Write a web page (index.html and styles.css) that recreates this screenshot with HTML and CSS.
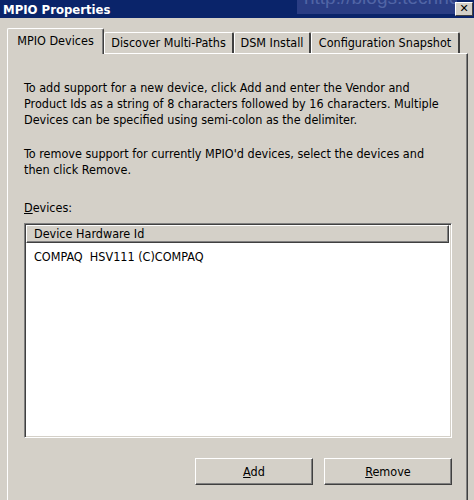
FILE: index.html
```html
<!DOCTYPE html>
<html>
<head>
<meta charset="utf-8">
<link rel="stylesheet" href="styles.css">
</head>
<body>
<div class="window">
  <div class="titlebar">
    <span class="title">MPIO Properties</span>
    <div class="watermark"><span>http://blogs.technet</span></div>
    <div class="close">✕</div>
  </div>
  <div class="tabs">
    <div class="tab active t1">MPIO Devices</div>
    <div class="tab t2">Discover Multi-Paths</div>
    <div class="tab t3">DSM Install</div>
    <div class="tab t4">Configuration Snapshot</div>
  </div>
  <div class="panel">
    <p class="para p1">To add support for a new device, click Add and enter the Vendor and Product Ids as a string of 8 characters followed by 16 characters. Multiple Devices can be specified using semi-colon as the delimiter.</p>
    <p class="para p2">To remove support for currently MPIO'd devices, select the devices and then click Remove.</p>
    <div class="label"><u>D</u>evices:</div>
    <div class="listbox">
      <div class="listhead"><span>Device Hardware Id</span></div>
      <div class="listrow">COMPAQ&nbsp; HSV111 (C)COMPAQ</div>
    </div>
    <div class="buttons">
      <div class="btn add"><u>A</u>dd</div>
      <div class="btn remove"><u>R</u>emove</div>
    </div>
  </div>
</div>
</body>
</html>
```

FILE: styles.css
```css
html, body {
  margin: 0;
  padding: 0;
  background: #d4d0c8;
}
body {
  width: 474px;
  height: 500px;
  overflow: hidden;
  font-family: "DejaVu Sans Condensed", "DejaVu Sans", sans-serif;
  font-size: 12.5px;
  color: #000;
}
.window {
  display: flex;
  flex-direction: column;
}
.titlebar {
  position: relative;
  height: 18px;
  background: #0a246a;
  display: flex;
  align-items: center;
}
.title {
  color: #fff;
  font-weight: bold;
  font-size: 13px;
  padding-left: 3px;
  font-family: "DejaVu Sans Condensed", "DejaVu Sans", sans-serif;
}
.watermark {
  position: absolute;
  left: 297px;
  top: 0;
  width: 160px;
  height: 14px;
  background: #2a3d84;
  overflow: hidden;
}
.watermark span {
  display: block;
  margin-top: -13px;
  padding-left: 7px;
  font-family: "Liberation Sans", sans-serif;
  font-size: 19px;
  line-height: 22px;
  color: #5165a6;
  white-space: nowrap;
}
.close {
  position: absolute;
  left: 455px;
  top: 2px;
  width: 16px;
  height: 12px;
  background: #d4d0c8;
  border-top: 1px solid #fff;
  border-left: 1px solid #fff;
  border-right: 1px solid #404040;
  border-bottom: 1px solid #404040;
  font-size: 11px;
  font-weight: bold;
  line-height: 12px;
  text-align: center;
  color: #000;
  font-family: "DejaVu Sans", sans-serif;
}
.tabs {
  display: flex;
  align-items: flex-end;
  height: 35px;
  padding-left: 7px;
  position: relative;
  z-index: 2;
}
.tab {
  box-sizing: border-box;
  height: 21px;
  border-top: 1px solid #fff;
  border-left: 1px solid #fff;
  border-right: 2px solid #404040;
  border-radius: 2px 2px 0 0;
  text-align: center;
  line-height: 20px;
  white-space: nowrap;
  background: #d4d0c8;
}
.tab.active {
  height: 26px;
  margin-bottom: -1px;
  line-height: 23px;
  border-right: 1px solid #404040;
  box-shadow: inset -1px 0 0 #808080;
}
.t1 { width: 97px; }
.t2 { width: 130px; }
.t3 { width: 77px; }
.t4 { width: 149px; }
.panel {
  box-sizing: border-box;
  margin-left: 7px;
  width: 461px;
  height: 460px;
  border-top: 1px solid #fff;
  border-left: 1px solid #fff;
  border-right: 1px solid #404040;
  box-shadow: inset -1px 0 0 #808080;
  padding: 26px 14px 0 16px;
  position: relative;
  z-index: 1;
}
.para {
  margin: 0;
  line-height: 16px;
}
.p2 {
  margin-top: 18px;
}
.label {
  margin-top: 22px;
  line-height: 16px;
}
.listbox {
  margin-top: 7px;
  box-sizing: border-box;
  width: 428px;
  height: 215px;
  background: #fff;
  border-top: 1px solid #808080;
  border-left: 1px solid #808080;
  border-right: 1px solid #fff;
  border-bottom: 1px solid #fff;
  box-shadow: inset 1px 1px 0 #404040, inset -1px -1px 0 #d4d0c8;
  padding: 1px 2px 0 1px;
}
.listhead {
  box-sizing: border-box;
  height: 18px;
  background: #d4d0c8;
  border-top: 1px solid #fff;
  border-left: 1px solid #fff;
  border-right: 1px solid #404040;
  border-bottom: 1px solid #404040;
  box-shadow: inset -1px -1px 0 #808080;
  padding-left: 7px;
  line-height: 16px;
}
.listrow {
  padding-left: 8px;
  line-height: 16px;
  margin-top: 6px;
}
.buttons {
  display: flex;
  justify-content: flex-end;
  gap: 11px;
  margin-top: 20px;
  width: 428px;
}
.btn {
  box-sizing: border-box;
  height: 27px;
  background: #d4d0c8;
  border-top: 1px solid #fff;
  border-left: 1px solid #fff;
  border-right: 1px solid #404040;
  border-bottom: 1px solid #404040;
  box-shadow: inset -1px -1px 0 #808080;
  text-align: center;
  line-height: 25px;
}
.add { width: 118px; }
.remove { width: 128px; }
```
